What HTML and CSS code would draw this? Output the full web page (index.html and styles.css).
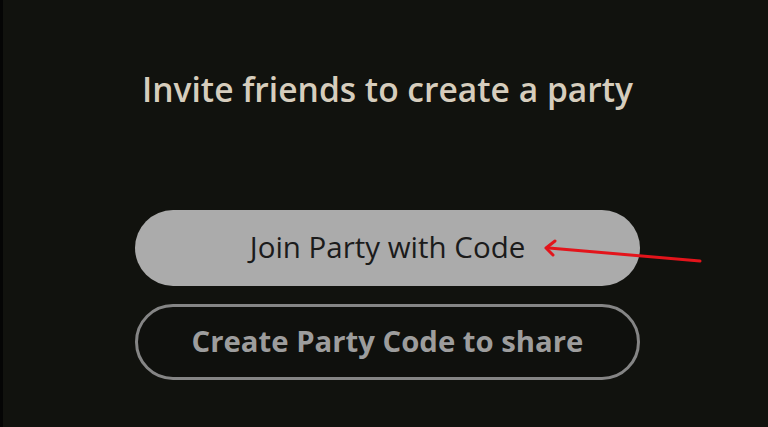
FILE: index.html
```html
<!DOCTYPE html>
<html>
<head>
<meta charset="utf-8">
<link rel="stylesheet" href="styles.css">
</head>
<body>
<div class="edge"></div>
<main class="panel">
  <h1 class="title">Invite friends to create a party</h1>
  <div class="actions">
    <button class="btn btn-join">Join Party with Code</button>
    <button class="btn btn-create">Create Party Code to share</button>
  </div>
  <svg class="arrow" width="170" height="30" viewBox="0 0 170 30">
    <line x1="161" y1="22" x2="10" y2="9" stroke="#e3141b" stroke-width="3" stroke-linecap="round"/>
    <polyline points="16,2 7,9 14,16" fill="none" stroke="#e3141b" stroke-width="3" stroke-linecap="round" stroke-linejoin="round"/>
  </svg>
</main>
</body>
</html>
```
FILE: styles.css
```css
html, body {
  margin: 0;
  padding: 0;
  width: 768px;
  height: 427px;
  overflow: hidden;
  background: #11120e;
}
body {
  display: flex;
  font-family: "Open Sans", "Noto Sans", sans-serif;
}
.edge {
  width: 3px;
  background: #050505;
  flex: none;
}
.panel {
  position: relative;
  flex: 1;
  display: flex;
  flex-direction: column;
  padding-left: 132px;
  width: 505px;
}
.title {
  margin: 67px 0 0 0;
  width: 505px;
  text-align: center;
  color: #d6cdbd;
  font-size: 33.6px;
  font-weight: 600;
  line-height: 44px;
}
.actions {
  margin-top: 99px;
  display: flex;
  flex-direction: column;
  gap: 18px;
  width: 505px;
}
.btn {
  height: 76px;
  border-radius: 38px;
  font-family: "Open Sans", "Noto Sans", sans-serif;
  padding: 0 0 3px 0;
  box-sizing: border-box;
}
.btn-join {
  background: #ababab;
  border: none;
  color: #1b1b1b;
  font-weight: 400;
  font-size: 29.5px;
}
.btn-create {
  background: #0f100d;
  border: 3px solid #858585;
  color: #9d9d9d;
  font-weight: 700;
  font-size: 29.3px;
}
.arrow {
  position: absolute;
  left: 536px;
  top: 239px;
}
```
